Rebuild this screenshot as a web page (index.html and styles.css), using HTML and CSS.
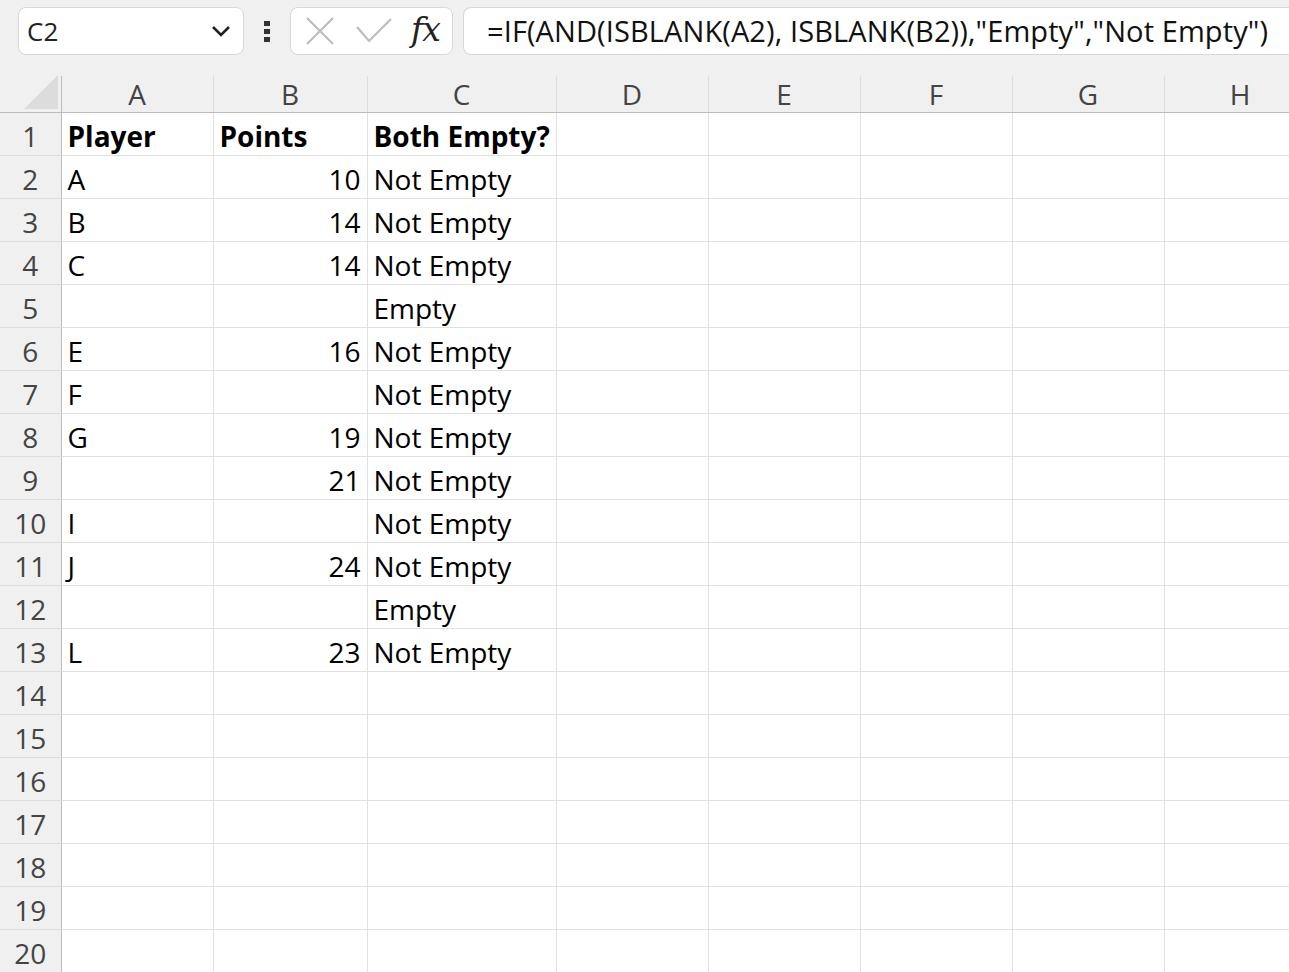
FILE: index.html
```html
<!DOCTYPE html>
<html lang="en">
<head>
  <meta charset="UTF-8">
  <title>Sheet</title>
  <link rel="stylesheet" href="styles.css">
</head>
<body>
<div class="toolbar">
  <div class="name-box">
    <span class="name-text">C2</span>
    <svg class="chevron" width="20" height="12" viewBox="0 0 20 12">
      <path d="M2 2 L10 10 L18 2" fill="none" stroke="#222" stroke-width="2.6"/>
    </svg>
  </div>
  <div class="dots">
    <span></span><span></span><span></span>
  </div>
  <div class="fx-box">
    <svg width="30" height="30" viewBox="0 0 30 30">
      <path d="M2 2 L28 28 M28 2 L2 28" stroke="#bdbdbd" stroke-width="2.2" fill="none"/>
    </svg>
    <svg width="38" height="28" viewBox="0 0 38 28">
      <path d="M2 10 L14 24 L36 2" stroke="#bdbdbd" stroke-width="2.2" fill="none"/>
    </svg>
    <span class="fx">fx</span>
  </div>
  <div class="formula-box">=IF(AND(ISBLANK(A2), ISBLANK(B2)),"Empty","Not Empty")</div>
</div>

<table class="sheet">
  <colgroup>
    <col class="c-row"><col class="c-a"><col class="c-b"><col class="c-c">
    <col class="c-n"><col class="c-n"><col class="c-n"><col class="c-n"><col class="c-n">
  </colgroup>
  <thead>
    <tr>
      <th class="corner"><div class="tri"></div></th>
      <th>A</th><th>B</th><th>C</th><th>D</th><th>E</th><th>F</th><th>G</th><th>H</th>
    </tr>
  </thead>
  <tbody>
    <tr><th>1</th><td class="bold">Player</td><td class="bold">Points</td><td class="bold">Both Empty?</td><td></td><td></td><td></td><td></td><td></td></tr>
    <tr><th>2</th><td>A</td><td class="num">10</td><td>Not Empty</td><td></td><td></td><td></td><td></td><td></td></tr>
    <tr><th>3</th><td>B</td><td class="num">14</td><td>Not Empty</td><td></td><td></td><td></td><td></td><td></td></tr>
    <tr><th>4</th><td>C</td><td class="num">14</td><td>Not Empty</td><td></td><td></td><td></td><td></td><td></td></tr>
    <tr><th>5</th><td></td><td class="num"></td><td>Empty</td><td></td><td></td><td></td><td></td><td></td></tr>
    <tr><th>6</th><td>E</td><td class="num">16</td><td>Not Empty</td><td></td><td></td><td></td><td></td><td></td></tr>
    <tr><th>7</th><td>F</td><td class="num"></td><td>Not Empty</td><td></td><td></td><td></td><td></td><td></td></tr>
    <tr><th>8</th><td>G</td><td class="num">19</td><td>Not Empty</td><td></td><td></td><td></td><td></td><td></td></tr>
    <tr><th>9</th><td></td><td class="num">21</td><td>Not Empty</td><td></td><td></td><td></td><td></td><td></td></tr>
    <tr><th>10</th><td>I</td><td class="num"></td><td>Not Empty</td><td></td><td></td><td></td><td></td><td></td></tr>
    <tr><th>11</th><td>J</td><td class="num">24</td><td>Not Empty</td><td></td><td></td><td></td><td></td><td></td></tr>
    <tr><th>12</th><td></td><td class="num"></td><td>Empty</td><td></td><td></td><td></td><td></td><td></td></tr>
    <tr><th>13</th><td>L</td><td class="num">23</td><td>Not Empty</td><td></td><td></td><td></td><td></td><td></td></tr>
    <tr><th>14</th><td></td><td></td><td></td><td></td><td></td><td></td><td></td><td></td></tr>
    <tr><th>15</th><td></td><td></td><td></td><td></td><td></td><td></td><td></td><td></td></tr>
    <tr><th>16</th><td></td><td></td><td></td><td></td><td></td><td></td><td></td><td></td></tr>
    <tr><th>17</th><td></td><td></td><td></td><td></td><td></td><td></td><td></td><td></td></tr>
    <tr><th>18</th><td></td><td></td><td></td><td></td><td></td><td></td><td></td><td></td></tr>
    <tr><th>19</th><td></td><td></td><td></td><td></td><td></td><td></td><td></td><td></td></tr>
    <tr><th>20</th><td></td><td></td><td></td><td></td><td></td><td></td><td></td><td></td></tr>
  </tbody>
</table>
</body>
</html>
```

FILE: styles.css
```css
body {
  margin: 0;
  padding: 0;
  background-color: #fff;
  font-family: "Open Sans", "Noto Sans", sans-serif;
  overflow: hidden;
}

.toolbar {
  display: flex;
  align-items: flex-start;
  height: 76px;
  padding: 7px 0 0 18px;
  background-color: #f0f0f0;
  box-sizing: border-box;
}

.name-box {
  display: flex;
  align-items: center;
  justify-content: space-between;
  width: 226px;
  height: 48px;
  padding: 0 12px 0 8px;
  box-sizing: border-box;
  background-color: #fff;
  border: 1px solid #d8d8d8;
  border-radius: 8px;
}

.name-text {
  font-size: 26px;
  color: #222;
}

.dots {
  display: flex;
  flex-direction: column;
  justify-content: space-between;
  width: 6px;
  height: 21px;
  margin: 14px 20px 0 20px;
}

.dots span {
  display: block;
  width: 6px;
  height: 5px;
  background-color: #333;
}

.fx-box {
  display: flex;
  align-items: center;
  gap: 20px;
  width: 163px;
  height: 48px;
  padding: 0 0 0 14px;
  box-sizing: border-box;
  background-color: #fff;
  border: 1px solid #d8d8d8;
  border-radius: 8px;
}

.fx {
  font-family: "DejaVu Serif", "Liberation Serif", serif;
  font-style: italic;
  font-size: 33px;
  color: #222;
  margin-left: -2px;
  margin-top: -4px;
  letter-spacing: -1px;
}

.formula-box {
  flex: 1;
  height: 48px;
  margin-left: 10px;
  padding-left: 23px;
  box-sizing: border-box;
  background-color: #fff;
  border: 1px solid #d8d8d8;
  border-right: none;
  border-radius: 8px 0 0 8px;
  font-size: 29px;
  line-height: 46px;
  color: #111;
  white-space: nowrap;
  letter-spacing: 0.1px;
}

.sheet {
  border-collapse: collapse;
  table-layout: fixed;
  width: 1316px;
}

.c-row { width: 61px; }
.c-a { width: 152px; }
.c-b { width: 154px; }
.c-c { width: 189px; }
.c-n { width: 152px; }

.sheet th,
.sheet td {
  height: 39px;
  padding: 3px 0 0 0;
  border-right: 1px solid #e1e1e1;
  border-bottom: 1px solid #e1e1e1;
  font-size: 28px;
  white-space: nowrap;
  overflow: hidden;
}

.sheet thead th {
  height: 36px;
  padding: 0;
  background-color: #f0f0f0;
  color: #444;
  font-weight: normal;
  text-align: center;
  border-right: 1px solid #dcdcdc;
  border-bottom: 1px solid #bcbcbc;
  line-height: 36px;
}

.sheet tbody th {
  background-color: #f0f0f0;
  color: #444;
  font-weight: normal;
  text-align: center;
  border-right: 1px solid #bcbcbc;
  border-bottom: 1px solid #dcdcdc;
}

.sheet .corner {
  position: relative;
  border-right: 1px solid #bcbcbc;
}

.tri {
  position: absolute;
  right: 3px;
  bottom: 3px;
  width: 0;
  height: 0;
  border-left: 34px solid transparent;
  border-bottom: 34px solid #dcdcdc;
}

.sheet td {
  color: #000;
  padding-left: 6px;
  text-align: left;
}

.sheet td.num {
  text-align: right;
  padding-right: 6px;
  padding-left: 0;
}

.sheet td.bold {
  font-weight: bold;
}
```
